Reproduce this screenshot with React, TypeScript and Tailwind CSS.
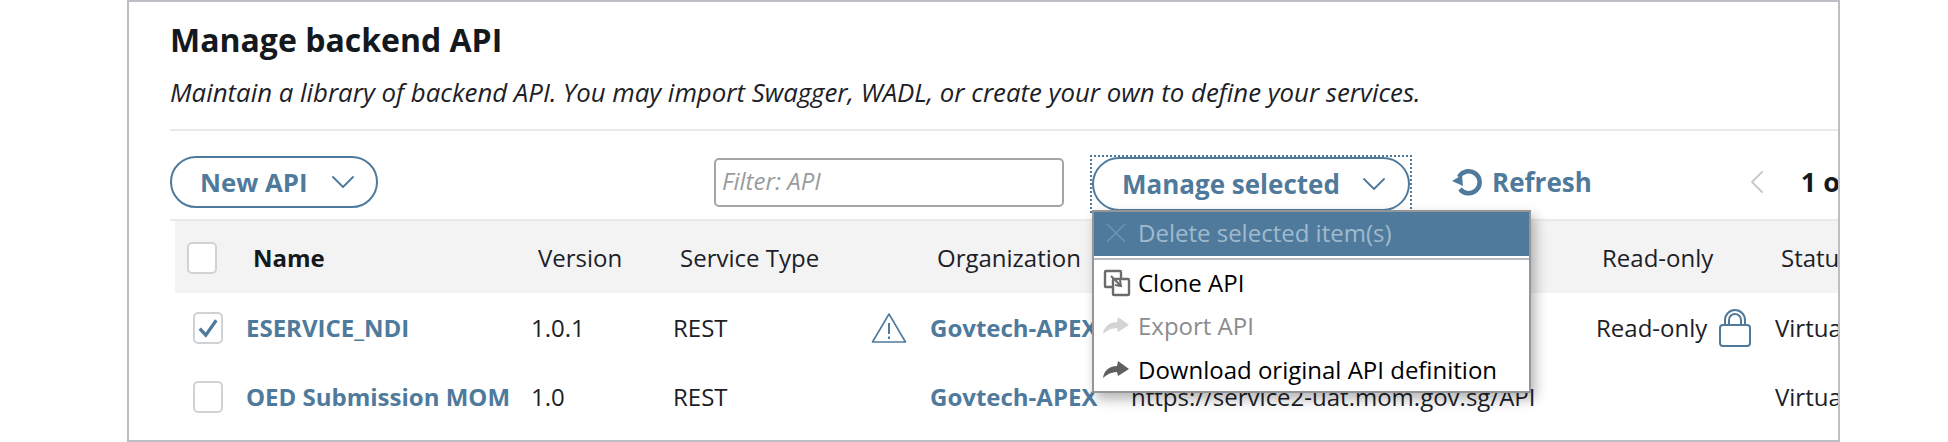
import { ChevronDown, ChevronLeft } from 'lucide-react';

const blue = 'text-[#4f7a9c]';

function Checkbox({ checked = false, className = '' }: { checked?: boolean; className?: string }) {
  return (
    <div className={`flex h-[32px] w-[30px] shrink-0 items-center justify-center rounded-[5px] border-2 border-[#d0d3d6] bg-white ${className}`}>
      {checked && (
        <svg viewBox="0 0 20 20" className="h-[22px] w-[22px]" fill="none" stroke="#4f7a9c" strokeWidth="3">
          <path d="M2.5 10.5 L8 16.5 L17.5 3" />
        </svg>
      )}
    </div>
  );
}

function RefreshIcon() {
  return (
    <svg viewBox="0 0 32 32" className="h-[32px] w-[32px] shrink-0" fill="none">
      <path d="M7 11 A11 11 0 1 1 8 23" stroke="#4f7a9c" strokeWidth="4.5" />
      <path d="M0 15 L10 9 L11 20 Z" fill="#4f7a9c" />
    </svg>
  );
}

function WarningIcon() {
  return (
    <svg viewBox="0 0 36 32" className="h-[32px] w-[36px]" fill="none" stroke="#4f7a9c" strokeWidth="1.6">
      <path d="M18 2 L34.5 30 H1.5 Z" strokeLinejoin="round" />
      <path d="M18 11 V22 M18 24.5 V27" strokeWidth="2" />
    </svg>
  );
}

function LockIcon() {
  return (
    <svg viewBox="0 0 32 38" className="h-[38px] w-[32px]" fill="none" stroke="#4f7a9c" strokeWidth="2">
      <rect x="1" y="16" width="30" height="21" rx="3" />
      <path d="M6 16 V11 A10 10 0 0 1 26 11 V16" />
      <path d="M10 16 V11 A6 6 0 0 1 22 11 V16" />
    </svg>
  );
}

function CloneIcon() {
  return (
    <svg viewBox="0 0 28 28" className="h-[28px] w-[28px] blur-[0.5px]" fill="none" stroke="#6b6b6b" strokeWidth="2.4">
      <rect x="2" y="2" width="16" height="16" rx="1" />
      <rect x="10" y="10" width="16" height="16" rx="1" fill="#fff" />
      <path d="M8 7 L18 17 M12 16 L18 17 L17 11" strokeWidth="2" />
    </svg>
  );
}

function ArrowIcon({ color }: { color: string }) {
  return (
    <svg viewBox="0 0 28 18" className="h-[18px] w-[28px] blur-[0.5px]" fill={color}>
      <path d="M1 17 C2 9 8 5 15 5 L16 0 L27 8 L16 15 L15 11 C10 11 5 13 1 17 Z" />
    </svg>
  );
}

function TableRow({
  name,
  version,
  checked,
  warning,
  url,
  lock,
}: {
  name: string;
  version: string;
  checked?: boolean;
  warning?: boolean;
  url: string;
  lock?: boolean;
}) {
  return (
    <div className="flex h-[69px] items-center text-[24px] text-[#1c2127]">
      <Checkbox checked={checked} className="ml-[23px] mr-[23px]" />
      <span className={`w-[285px] shrink-0 whitespace-nowrap font-bold ${blue}`}>{name}</span>
      <span className="w-[142px] shrink-0">{version}</span>
      <span className="w-[198px] shrink-0">REST</span>
      <span className="flex w-[59px] shrink-0 justify-start">{warning && <WarningIcon />}</span>
      <span className={`w-[201px] shrink-0 whitespace-nowrap font-bold ${blue}`}>Govtech-APEX</span>
      <span className="w-[465px] shrink-0 whitespace-nowrap">{url}</span>
      <span className="flex w-[179px] shrink-0 items-center gap-[12px] whitespace-nowrap">
        {lock && (
          <>
            Read-only
            <LockIcon />
          </>
        )}
      </span>
      <span className="whitespace-nowrap">Virtual</span>
    </div>
  );
}

export default function App() {
  return (
    <div className="h-[442px] w-[1948px] overflow-hidden bg-white font-['Open_Sans',sans-serif]">
      <div className="relative ml-[127px] h-[442px] w-[1713px] overflow-hidden border-2 border-[#bcc0c4] pl-[41px] text-[#1c2127]">
        <h1 className="mt-[19px] text-[32px] leading-[38px] font-bold text-[#14191e]">Manage backend API</h1>
        <p className="mt-[16px] text-[25.8px] leading-[34px] italic whitespace-nowrap">
          Maintain a library of backend API. You may import Swagger, WADL, or create your own to define your services.
        </p>
        <div className="mt-[20px] h-[2px] bg-[#e9eaeb]" />

        {/* Toolbar */}
        <div className="flex h-[88px] items-center pt-[26px] pb-[12px]">
          <button type="button" className={`flex h-[52px] w-[208px] shrink-0 items-center justify-between rounded-full border-2 border-[#4f7a9c] pr-[13px] pl-[28px] text-[25.8px] font-bold ${blue}`}>
            New API
            <ChevronDown className="h-[40px] w-[40px]" strokeWidth={1.1} />
          </button>
          <div className="ml-[336px] flex h-[49px] w-[350px] shrink-0 items-center rounded-[5px] border-2 border-[#a3a5a8] px-[6px] pb-[2px] text-[24px] text-[#9a9c9e] italic">
            Filter: API
          </div>
          <div className="relative mt-[4px] ml-[28px] shrink-0 outline-2 outline-offset-0 outline-[#4f7a9c] outline-dotted">
            <button type="button" className={`flex h-[54px] w-[318px] items-center justify-between rounded-full border-2 border-[#4f7a9c] pr-[14px] pl-[28px] text-[26px] font-bold whitespace-nowrap ${blue}`}>
              Manage selected
              <ChevronDown className="h-[40px] w-[40px]" strokeWidth={1.1} />
            </button>
          </div>
          <div className={`ml-[42px] flex shrink-0 items-center gap-[8px] text-[26px] font-bold ${blue}`}>
            <RefreshIcon />
            Refresh
          </div>
          <ChevronLeft className="ml-[145px] h-[40px] w-[40px] shrink-0 text-[#c6c8ca]" strokeWidth={1.1} />
          <span className="ml-[24px] shrink-0 text-[27px] font-bold whitespace-nowrap text-[#14191e]">1 of 1</span>
        </div>

        {/* Table */}
        <div className="border-t-2 border-[#e9eaeb]">
          <div className="ml-[5px] flex h-[72px] items-center bg-[#f3f3f3] pt-[2px] text-[24px] text-[#1c2127]">
            <Checkbox className="ml-[12px] mr-[36px]" />
            <span className="w-[285px] shrink-0 font-bold text-[#14191e]">Name</span>
            <span className="w-[142px] shrink-0">Version</span>
            <span className="w-[257px] shrink-0">Service Type</span>
            <span className="w-[665px] shrink-0">Organization</span>
            <span className="w-[179px] shrink-0">Read-only</span>
            <span className="whitespace-nowrap">Status</span>
          </div>
          <TableRow name="ESERVICE_NDI" version="1.0.1" checked warning url="" lock />
          <TableRow name="OED Submission MOM" version="1.0" url="https://service2-uat.mom.gov.sg/API" />
        </div>

        {/* Dropdown menu */}
        <div className="absolute top-[208px] left-[963px] w-[439px] border-2 border-[#949698] bg-white text-[24px] shadow-[4px_6px_12px_rgba(0,0,0,0.3)]">
          <div className="flex h-[44px] items-center bg-[#4f7a9c] pb-[2px] text-[#9fbace]">
            <span className="flex w-[44px] justify-center text-[#6f93ae]">
              <svg viewBox="0 0 20 20" className="h-[20px] w-[20px]" stroke="currentColor" strokeWidth="1.6">
                <path d="M1 1 L19 19 M19 1 L1 19" />
              </svg>
            </span>
            Delete selected item(s)
          </div>
          <div className="mt-[2px] h-[2px] bg-[#b4bbc1]" />
          <div className="flex h-[44px] items-center pt-[1px] text-black">
            <span className="flex w-[44px] justify-center pl-[1px]"><CloneIcon /></span>
            Clone API
          </div>
          <div className="flex h-[43px] items-center text-[#8c8c8c]">
            <span className="flex w-[44px] justify-center"><ArrowIcon color="#d4d4d4" /></span>
            Export API
          </div>
          <div className="flex h-[44px] items-center pt-[2px] text-black">
            <span className="flex w-[44px] justify-center"><ArrowIcon color="#5f5f5f" /></span>
            Download original API definition
          </div>
        </div>
      </div>
    </div>
  );
}
